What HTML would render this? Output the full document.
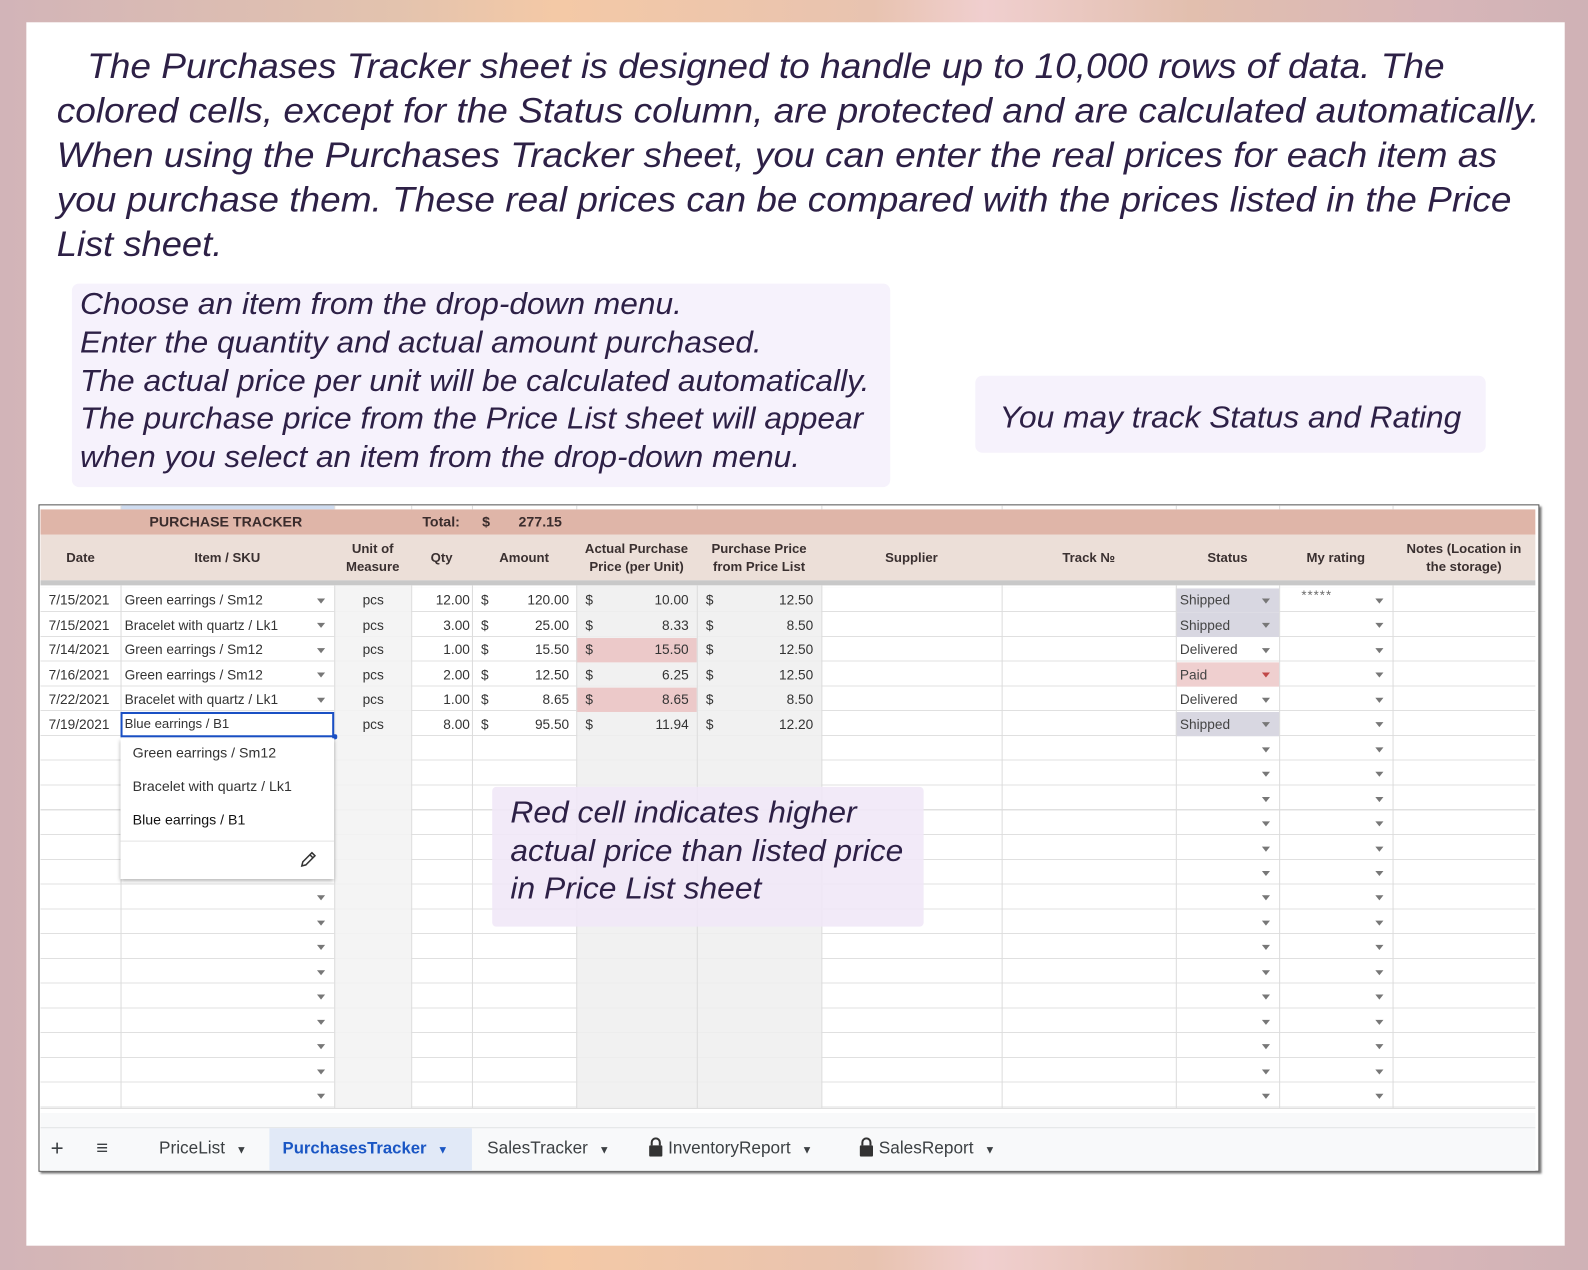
<!DOCTYPE html>
<html><head><meta charset="utf-8"><style>
*{margin:0;padding:0;box-sizing:border-box}
html,body{width:1588px;height:1270px;overflow:hidden}
body{background:linear-gradient(90deg,#d2b4b8 0%,#e3c3ae 25%,#f4c9a6 35%,#e8c3b0 55%,#f0cfcf 62%,#e2bfae 75%,#d8b6b8 90%,#cfb2b6 100%)}
#w{position:absolute;left:0;top:0;width:1568px;height:1254px;transform:scale(1.01276);transform-origin:0 0}
#panel{position:absolute;left:26px;top:22px;width:1519px;height:1208px;background:#fff}
.fit{position:absolute;white-space:nowrap;font-family:"Liberation Sans",sans-serif;font-style:italic;color:#2d2046}
.fit span{display:inline-block;transform-origin:0 50%}
.p{font-size:35px;height:44px;line-height:44px}
.q{font-size:30px;height:38px;line-height:38px}
.box{position:absolute;background:#f6f2fc;border-radius:7px}
.a{position:absolute;font-family:"Liberation Sans",sans-serif;white-space:nowrap}
.c{position:absolute;height:24px;line-height:24px;font-size:13.5px;color:#333;font-family:"Liberation Sans",sans-serif;white-space:nowrap}
.h{position:absolute;font-family:"Liberation Sans",sans-serif;font-weight:bold;font-size:13px;color:#3a3030;text-align:center;line-height:18px}
.arr{position:absolute;width:0;height:0;border-left:4.5px solid transparent;border-right:4.5px solid transparent;border-top:5px solid #777}
.vl{position:absolute;width:1px;background:#dcdcdc}
.tab{position:absolute;top:1113px;height:42px;line-height:42px;font-size:17px;color:#3c4043;font-family:"Liberation Sans",sans-serif;white-space:nowrap}
</style></head><body><div id="w">
<div id="panel"></div>

<div class="fit p" style="left:86px;top:44px;width:1341px"><span>The Purchases Tracker sheet is designed to handle up to 10,000 rows of data. The</span></div>
<div class="fit p" style="left:56px;top:88px;width:1464px"><span>colored cells, except for the Status column, are protected and are calculated automatically.</span></div>
<div class="fit p" style="left:56px;top:132px;width:1422px"><span>When using the Purchases Tracker sheet, you can enter the real prices for each item as</span></div>
<div class="fit p" style="left:56px;top:176px;width:1436px"><span>you purchase them. These real prices can be compared with the prices listed in the Price</span></div>
<div class="fit p" style="left:56px;top:220px;width:164px"><span>List sheet.</span></div>

<div class="box" style="left:71px;top:280px;width:808px;height:201px"></div>
<div class="fit q" style="left:79px;top:282px;width:594px"><span>Choose an item from the drop-down menu.</span></div>
<div class="fit q" style="left:79px;top:320px;width:673px"><span>Enter the quantity and actual amount purchased.</span></div>
<div class="fit q" style="left:79px;top:358px;width:779px"><span>The actual price per unit will be calculated automatically.</span></div>
<div class="fit q" style="left:79px;top:395px;width:773px"><span>The purchase price from the Price List sheet will appear</span></div>
<div class="fit q" style="left:79px;top:433px;width:711px"><span>when you select an item from the drop-down menu.</span></div>

<div class="box" style="left:963px;top:371px;width:504px;height:76px"></div>
<div class="fit q" style="left:987px;top:394px;width:456px"><span>You may track Status and Rating</span></div>

<div style="position:absolute;left:38px;top:498px;width:1482px;height:659px;background:#fff;border:1px solid #555;box-shadow:2px 2px 2px #777"></div>
<div style="position:absolute;left:119px;top:499px;width:211px;height:4px;background:#cfdcf0"></div>
<div style="position:absolute;left:40px;top:503px;width:1476px;height:25px;background:#dfb5a8"></div>
<div style="position:absolute;left:40px;top:528px;width:1476px;height:45px;background:#ecdfd8"></div>
<div style="position:absolute;left:40px;top:573px;width:1476px;height:5px;background:#c8c8c8"></div>
<div id="grid" style="position:absolute;left:40px;top:580px;width:1476px;height:514px;background:repeating-linear-gradient(to bottom,transparent 0,transparent 23.45px,#e0e0e0 23.45px,#e0e0e0 24.45px)"></div>
<div style="position:absolute;left:330px;top:578px;width:76px;height:516px;background:#f3f3f3;opacity:.9"></div>
<div style="position:absolute;left:569px;top:578px;width:242px;height:516px;background:#efefef;opacity:.85"></div>

<div class="a" style="left:40px;top:503px;width:366px;height:25px;line-height:25px;text-align:center;font-weight:bold;font-size:14px;color:#3a2c2c">PURCHASE TRACKER</div>
<div class="a" style="left:417px;top:503px;line-height:25px;font-weight:bold;font-size:14px;color:#3a2c2c">Total:</div>
<div class="a" style="left:476px;top:503px;line-height:25px;font-weight:bold;font-size:14px;color:#3a2c2c">$</div>
<div class="a" style="left:512px;top:503px;line-height:25px;font-weight:bold;font-size:14px;color:#3a2c2c">277.15</div>

<div class="h" style="left:40px;top:542px;width:79px">Date</div>
<div class="h" style="left:119px;top:542px;width:211px">Item / SKU</div>
<div class="h" style="left:330px;top:533px;width:76px">Unit of<br>Measure</div>
<div class="h" style="left:406px;top:542px;width:60px">Qty</div>
<div class="h" style="left:466px;top:542px;width:103px">Amount</div>
<div class="h" style="left:569px;top:533px;width:119px">Actual Purchase<br>Price (per Unit)</div>
<div class="h" style="left:688px;top:533px;width:123px">Purchase Price<br>from Price List</div>
<div class="h" style="left:811px;top:542px;width:178px">Supplier</div>
<div class="h" style="left:989px;top:542px;width:172px">Track №</div>
<div class="h" style="left:1161px;top:542px;width:102px">Status</div>
<div class="h" style="left:1263px;top:542px;width:112px">My rating</div>
<div class="h" style="left:1375px;top:533px;width:141px">Notes (Location in<br>the storage)</div>

<div style="position:absolute;left:569px;top:630px;width:119px;height:24px;background:#ecc9c9"></div>
<div style="position:absolute;left:569px;top:679px;width:119px;height:24px;background:#ecc9c9"></div>
<div style="position:absolute;left:1161px;top:581px;width:102px;height:24px;background:#d8d7e1"></div>
<div style="position:absolute;left:1161px;top:605px;width:102px;height:24px;background:#d8d7e1"></div>
<div style="position:absolute;left:1161px;top:654px;width:102px;height:24px;background:#efcfcf"></div>
<div style="position:absolute;left:1161px;top:703px;width:102px;height:24px;background:#d8d7e1"></div>

<div id="vls"></div>

<div class="c" style="left:48px;top:581px">7/15/2021</div><div class="c" style="left:123px;top:581px">Green earrings / Sm12</div>
<div class="c" style="left:48px;top:606px">7/15/2021</div><div class="c" style="left:123px;top:606px">Bracelet with quartz / Lk1</div>
<div class="c" style="left:48px;top:630px">7/14/2021</div><div class="c" style="left:123px;top:630px">Green earrings / Sm12</div>
<div class="c" style="left:48px;top:655px">7/16/2021</div><div class="c" style="left:123px;top:655px">Green earrings / Sm12</div>
<div class="c" style="left:48px;top:679px">7/22/2021</div><div class="c" style="left:123px;top:679px">Bracelet with quartz / Lk1</div>
<div class="c" style="left:48px;top:704px">7/19/2021</div>

<div id="rows"></div>

<div class="c" style="left:358px;top:581px">pcs</div><div class="c" style="left:358px;top:606px">pcs</div><div class="c" style="left:358px;top:630px">pcs</div><div class="c" style="left:358px;top:655px">pcs</div><div class="c" style="left:358px;top:679px">pcs</div><div class="c" style="left:358px;top:704px">pcs</div>

<div class="c" style="left:406px;top:581px;width:58px;text-align:right">12.00</div>
<div class="c" style="left:406px;top:606px;width:58px;text-align:right">3.00</div>
<div class="c" style="left:406px;top:630px;width:58px;text-align:right">1.00</div>
<div class="c" style="left:406px;top:655px;width:58px;text-align:right">2.00</div>
<div class="c" style="left:406px;top:679px;width:58px;text-align:right">1.00</div>
<div class="c" style="left:406px;top:704px;width:58px;text-align:right">8.00</div>

<div class="c" style="left:475px;top:581px">$</div><div class="c" style="left:466px;top:581px;width:96px;text-align:right">120.00</div>
<div class="c" style="left:475px;top:606px">$</div><div class="c" style="left:466px;top:606px;width:96px;text-align:right">25.00</div>
<div class="c" style="left:475px;top:630px">$</div><div class="c" style="left:466px;top:630px;width:96px;text-align:right">15.50</div>
<div class="c" style="left:475px;top:655px">$</div><div class="c" style="left:466px;top:655px;width:96px;text-align:right">12.50</div>
<div class="c" style="left:475px;top:679px">$</div><div class="c" style="left:466px;top:679px;width:96px;text-align:right">8.65</div>
<div class="c" style="left:475px;top:704px">$</div><div class="c" style="left:466px;top:704px;width:96px;text-align:right">95.50</div>

<div class="c" style="left:578px;top:581px">$</div><div class="c" style="left:569px;top:581px;width:111px;text-align:right">10.00</div>
<div class="c" style="left:578px;top:606px">$</div><div class="c" style="left:569px;top:606px;width:111px;text-align:right">8.33</div>
<div class="c" style="left:578px;top:630px">$</div><div class="c" style="left:569px;top:630px;width:111px;text-align:right">15.50</div>
<div class="c" style="left:578px;top:655px">$</div><div class="c" style="left:569px;top:655px;width:111px;text-align:right">6.25</div>
<div class="c" style="left:578px;top:679px">$</div><div class="c" style="left:569px;top:679px;width:111px;text-align:right">8.65</div>
<div class="c" style="left:578px;top:704px">$</div><div class="c" style="left:569px;top:704px;width:111px;text-align:right">11.94</div>

<div class="c" style="left:697px;top:581px">$</div><div class="c" style="left:688px;top:581px;width:115px;text-align:right">12.50</div>
<div class="c" style="left:697px;top:606px">$</div><div class="c" style="left:688px;top:606px;width:115px;text-align:right">8.50</div>
<div class="c" style="left:697px;top:630px">$</div><div class="c" style="left:688px;top:630px;width:115px;text-align:right">12.50</div>
<div class="c" style="left:697px;top:655px">$</div><div class="c" style="left:688px;top:655px;width:115px;text-align:right">12.50</div>
<div class="c" style="left:697px;top:679px">$</div><div class="c" style="left:688px;top:679px;width:115px;text-align:right">8.50</div>
<div class="c" style="left:697px;top:704px">$</div><div class="c" style="left:688px;top:704px;width:115px;text-align:right">12.20</div>

<div class="c" style="left:1165px;top:581px;color:#444">Shipped</div>
<div class="c" style="left:1165px;top:606px;color:#444">Shipped</div>
<div class="c" style="left:1165px;top:630px;color:#444">Delivered</div>
<div class="c" style="left:1165px;top:655px;color:#444">Paid</div>
<div class="c" style="left:1165px;top:679px;color:#444">Delivered</div>
<div class="c" style="left:1165px;top:704px;color:#444">Shipped</div>
<div class="c" style="left:1285px;top:576px;color:#666;font-size:13px;letter-spacing:1px">*****</div>

<div style="position:absolute;left:119px;top:703px;width:211px;height:25px;border:2px solid #1a4fc4;background:#fff"></div>
<div class="c" style="left:123px;top:703px;font-size:13px">Blue earrings / B1</div>
<div style="position:absolute;left:328px;top:725px;width:5px;height:5px;background:#1a4fc4;border-radius:2px"></div>

<div style="position:absolute;left:119px;top:729px;width:211px;height:139px;background:#fff;box-shadow:0 2px 4px rgba(0,0,0,.35);z-index:5">
<div class="a" style="left:12px;top:6px;font-size:14px;line-height:16px;color:#333">Green earrings / Sm12</div>
<div class="a" style="left:12px;top:39px;font-size:14px;line-height:16px;color:#333">Bracelet with quartz / Lk1</div>
<div class="a" style="left:12px;top:72px;font-size:14px;line-height:16px;color:#111">Blue earrings / B1</div>
<div style="position:absolute;left:0;top:101px;width:211px;height:1px;background:#e3e3e3"></div>
<svg style="position:absolute;left:176px;top:111px" width="18" height="18" viewBox="0 0 18 18"><path d="M3 15 L4 11 L13 2 L16 5 L7 14 Z M11 4 L14 7" fill="none" stroke="#333" stroke-width="1.5"/></svg>
</div>

<div style="position:absolute;left:486px;top:777px;width:426px;height:138px;background:rgba(240,231,247,.88);border-radius:4px;z-index:6"></div>
<div class="fit q" style="left:504px;top:784px;width:342px;z-index:7"><span>Red cell indicates higher</span></div>
<div class="fit q" style="left:504px;top:822px;width:388px;z-index:7"><span>actual price than listed price</span></div>
<div class="fit q" style="left:504px;top:859px;width:248px;z-index:7"><span>in Price List sheet</span></div>

<div style="position:absolute;left:40px;top:1094px;width:1476px;height:1px;background:#ddd"></div>
<div style="position:absolute;left:40px;top:1099px;width:1476px;height:14px;background:#f8f9fa"></div>
<div style="position:absolute;left:40px;top:1113px;width:1476px;height:43px;background:#f8f9fa;border-top:1px solid #e2e3e5"></div>
<div style="position:absolute;left:266px;top:1114px;width:200px;height:42px;background:#e1e9f7"></div>
<div class="tab" style="left:50px;font-size:22px">+</div>
<div class="tab" style="left:95px;font-size:20px">≡</div>
<div class="tab" style="left:157px">PriceList <span style="font-size:11px;margin-left:6px">▼</span></div>
<div class="tab" style="left:279px;color:#1a56c4;font-weight:bold;font-size:16.5px">PurchasesTracker <span style="font-size:11px;margin-left:6px">▼</span></div>
<div class="tab" style="left:481px">SalesTracker <span style="font-size:11px;margin-left:6px">▼</span></div>
<div class="tab" style="left:640px"><svg width="15" height="19" viewBox="0 0 15 19" style="vertical-align:-3px"><path d="M3.5 8 V5 a4 4 0 0 1 8 0 V8" fill="none" stroke="#333" stroke-width="2"/><rect x="1" y="8" width="13" height="11" rx="1" fill="#333"/></svg> InventoryReport <span style="font-size:11px;margin-left:6px">▼</span></div>
<div class="tab" style="left:848px"><svg width="15" height="19" viewBox="0 0 15 19" style="vertical-align:-3px"><path d="M3.5 8 V5 a4 4 0 0 1 8 0 V8" fill="none" stroke="#333" stroke-width="2"/><rect x="1" y="8" width="13" height="11" rx="1" fill="#333"/></svg> SalesReport <span style="font-size:11px;margin-left:6px">▼</span></div>
</div>
<script>
(function(){
var cols=[119,330,406,466,569,688,811,989,1161,1263,1375];
var vh='';
cols.forEach(function(x){vh+='<div class="vl" style="left:'+x+'px;top:499px;height:4px"></div><div class="vl" style="left:'+x+'px;top:578px;height:516px"></div>';});
document.getElementById('vls').innerHTML=vh;
var r='';
for(var i=0;i<21;i++){var cy=593+i*24.45;var t=Math.round(cy-2);
 if(i<5||i>11) r+='<div class="arr" style="left:313px;top:'+t+'px"></div>';
 r+='<div class="arr" style="left:1246px;top:'+t+'px;'+(i==3?'border-top-color:#c04848':'')+'"></div>';
 r+='<div class="arr" style="left:1358px;top:'+t+'px"></div>';}
document.getElementById('rows').innerHTML=r;
document.querySelectorAll('.fit').forEach(function(d){var s=d.firstChild;var tw=parseFloat(d.style.width);var ow=s.offsetWidth;if(ow>0)s.style.transform='scaleX('+(tw/ow)+')';});
})();
</script>
</body></html>
